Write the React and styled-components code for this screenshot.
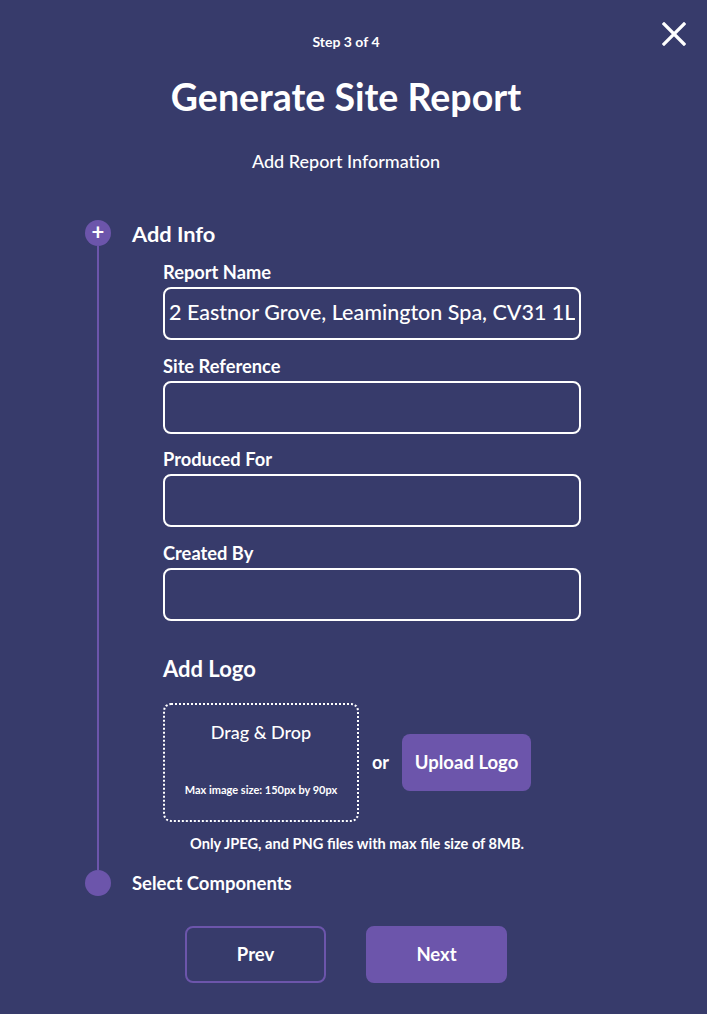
import styled, { createGlobalStyle } from 'styled-components'

const COLORS = {
  bg: '#373b6b',
  purple: '#6c55ab',
  white: '#ffffff',
};

const GlobalStyle = createGlobalStyle`
  body {
    margin: 0;
    background: ${COLORS.bg};
    font-family: "Lato", "Noto Sans", sans-serif;
    color: ${COLORS.white};
  }
`

const fields = [
  { label: 'Report Name', value: '2 Eastnor Grove, Leamington Spa, CV31 1L' },
  { label: 'Site Reference', value: '' },
  { label: 'Produced For', value: '' },
  { label: 'Created By', value: '' },
];

const CloseIcon = () => (
  <svg width="24" height="24" viewBox="0 0 24 24">
    <path d="M2 2 L22 22 M22 2 L2 22" stroke="#fff" strokeWidth="3.2" strokeLinecap="square" />
  </svg>
);

const App = () => {
  return (
    <Page>
      <GlobalStyle />
      <CloseButton aria-label="Close"><CloseIcon /></CloseButton>
      <Header>
        <StepText>Step 3 of 4</StepText>
        <Title>Generate Site Report</Title>
        <SubTitle>Add Report Information</SubTitle>
      </Header>

      <Steps>
        <StepRow>
          <Dot>+</Dot>
          <StepTitle>Add Info</StepTitle>
        </StepRow>
        <StepBody>
          {fields.map((f) => (
            <Field key={f.label}>
              <Label>{f.label}</Label>
              <Input defaultValue={f.value} />
            </Field>
          ))}
          <LogoTitle>Add Logo</LogoTitle>
          <LogoRow>
            <DropZone>
              <DropText>Drag &amp; Drop</DropText>
              <DropHint>Max image size: 150px by 90px</DropHint>
            </DropZone>
            <OrText>or</OrText>
            <UploadButton>Upload Logo</UploadButton>
          </LogoRow>
          <Note>Only JPEG, and PNG files with max file size of 8MB.</Note>
        </StepBody>
        <StepRow>
          <Dot />
          <StepName>Select Components</StepName>
        </StepRow>
      </Steps>

      <Actions>
        <NavButton>Prev</NavButton>
        <NavButton primary>Next</NavButton>
      </Actions>
    </Page>
  )
}

const Page = styled.div`
  position: relative;
  width: 707px;
  height: 1014px;
  box-sizing: border-box;
  padding-right: 15px;
`

const CloseButton = styled.button`
  position: absolute;
  top: 22px;
  right: 21px;
  padding: 0;
  border: none;
  background: none;
  cursor: pointer;
  line-height: 0;
`

const Header = styled.header`
  display: flex;
  flex-direction: column;
  align-items: center;
  padding-top: 32px;
`

const StepText = styled.p`
  margin: 0;
  font-size: 14px;
  line-height: 20px;
  font-weight: 700;
`

const Title = styled.h1`
  margin: 23px 0 0 0;
  font-size: 37.5px;
  line-height: 44px;
  font-weight: 700;
`

const SubTitle = styled.p`
  margin: 31px 0 0 0;
  font-size: 18px;
  line-height: 22px;
  font-weight: 500;
`

const Steps = styled.div`
  margin-top: 48px;
  padding-left: 85px;
`

const StepRow = styled.div`
  display: flex;
  align-items: center;
  gap: 21px;
  height: 26px;
`

const Dot = styled.span`
  width: 26px;
  height: 26px;
  border-radius: 50%;
  background: ${COLORS.purple};
  display: flex;
  align-items: center;
  justify-content: center;
  font-size: 22px;
  font-weight: 700;
  line-height: 1;
  padding-bottom: 2px;
  box-sizing: border-box;
`

const StepTitle = styled.h2`
  margin: 0;
  font-size: 21.8px;
  font-weight: 700;
`

const StepName = styled.span`
  font-size: 18.5px;
  font-weight: 700;
`

const StepBody = styled.div`
  margin-left: 12px;
  border-left: 2px solid ${COLORS.purple};
  padding: 15px 0 17px 64px;
`

const Field = styled.div`
  display: flex;
  flex-direction: column;
  gap: 4px;
  width: 418px;
  margin-bottom: 14.5px;
`

const Label = styled.label`
  font-size: 18.3px;
  line-height: 22px;
  font-weight: 700;
`

const Input = styled.input`
  height: 53px;
  box-sizing: border-box;
  border: 2px solid ${COLORS.white};
  border-radius: 8px;
  background: transparent;
  color: ${COLORS.white};
  font-family: inherit;
  font-size: 21.5px;
  font-weight: 500;
  padding: 0 4px 3px;
  outline: none;
`

const LogoTitle = styled.h3`
  margin: 35px 0 0 0;
  font-size: 22px;
  line-height: 26px;
  font-weight: 700;
`

const LogoRow = styled.div`
  display: flex;
  align-items: center;
  margin-top: 21px;
`

const DropZone = styled.div`
  width: 196px;
  height: 119px;
  box-sizing: border-box;
  border: 2px dotted ${COLORS.white};
  border-radius: 8px;
  display: flex;
  flex-direction: column;
  align-items: center;
  padding-top: 16px;
`

const DropText = styled.span`
  font-size: 18px;
  line-height: 22px;
  font-weight: 500;
`

const DropHint = styled.span`
  margin-top: 40px;
  font-size: 11px;
  font-weight: 700;
`

const OrText = styled.span`
  margin: 0 13px;
  font-size: 18px;
  font-weight: 700;
`

const UploadButton = styled.button`
  width: 129px;
  height: 57px;
  border: none;
  border-radius: 8px;
  background: ${COLORS.purple};
  color: ${COLORS.white};
  font-family: inherit;
  font-size: 18.5px;
  font-weight: 700;
`

const Note = styled.p`
  margin: 13px 0 0 27px;
  font-size: 14.6px;
  line-height: 18px;
  font-weight: 700;
`

const Actions = styled.div`
  display: flex;
  justify-content: center;
  gap: 40px;
  margin-top: 30px;
`

const NavButton = styled.button`
  width: 141px;
  height: 57px;
  box-sizing: border-box;
  border-radius: 8px;
  border: 2px solid ${COLORS.purple};
  background: ${({ primary }) => (primary ? COLORS.purple : 'transparent')};
  color: ${COLORS.white};
  font-family: inherit;
  font-size: 18.5px;
  font-weight: 700;
`

export default App;
